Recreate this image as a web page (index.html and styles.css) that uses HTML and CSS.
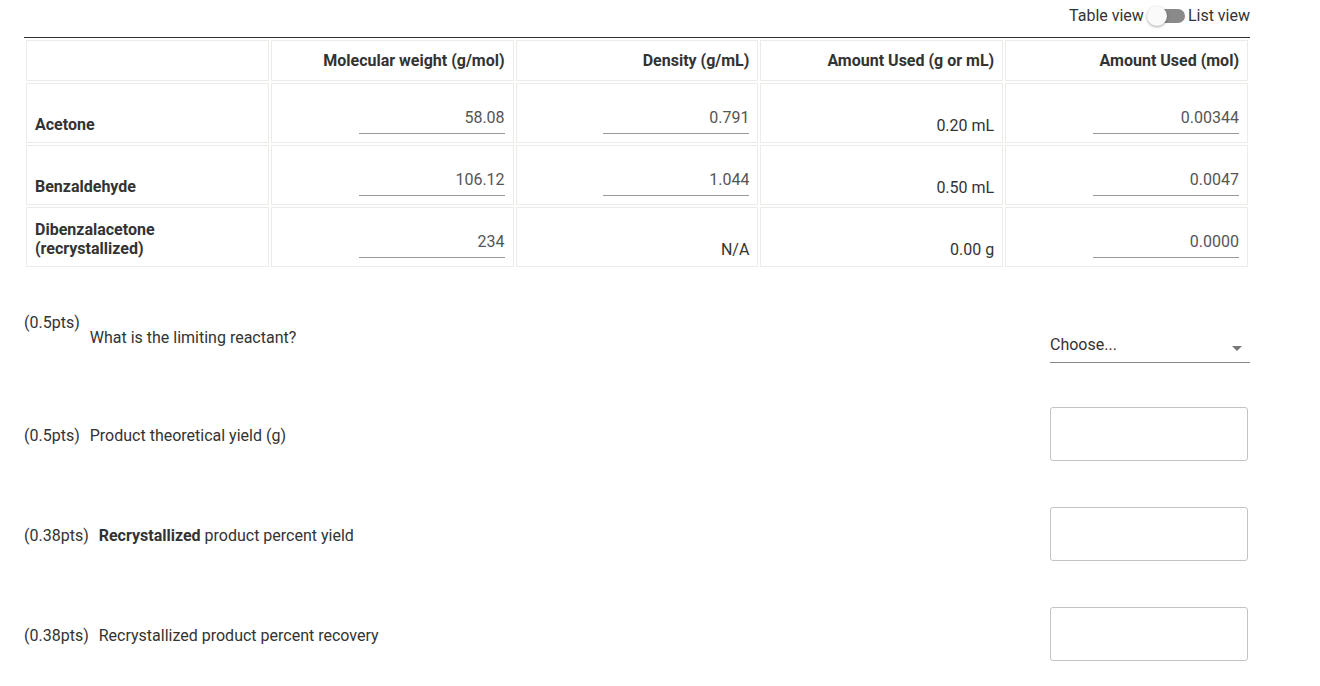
FILE: index.html
```html
<!DOCTYPE html>
<html>
<head>
<meta charset="utf-8">
<link rel="stylesheet" href="styles.css">
</head>
<body>
<div class="page">
  <div class="view-toggle">
    <span class="toggle-label">Table view</span>
    <span class="switch"><span class="knob"></span></span>
    <span class="toggle-label">List view</span>
  </div>
  <table class="data-table">
    <thead>
      <tr>
        <th></th>
        <th>Molecular weight (g/mol)</th>
        <th>Density (g/mL)</th>
        <th>Amount Used (g or mL)</th>
        <th>Amount Used (mol)</th>
      </tr>
    </thead>
    <tbody>
      <tr>
        <td class="label">Acetone</td>
        <td class="num"><input class="line-input" value="58.08"></td>
        <td class="num"><input class="line-input" value="0.791"></td>
        <td class="num text">0.20 mL</td>
        <td class="num"><input class="line-input" value="0.00344"></td>
      </tr>
      <tr>
        <td class="label">Benzaldehyde</td>
        <td class="num"><input class="line-input" value="106.12"></td>
        <td class="num"><input class="line-input" value="1.044"></td>
        <td class="num text">0.50 mL</td>
        <td class="num"><input class="line-input" value="0.0047"></td>
      </tr>
      <tr>
        <td class="label">Dibenzalacetone<br>(recrystallized)</td>
        <td class="num"><input class="line-input" value="234"></td>
        <td class="num text">N/A</td>
        <td class="num text">0.00 g</td>
        <td class="num"><input class="line-input" value="0.0000"></td>
      </tr>
    </tbody>
  </table>

  <div class="questions">
    <div class="q q-first">
      <div class="q-main">
        <span class="pts">(0.5pts)</span>
        <span class="q-text q-text-drop">What is the limiting reactant?</span>
      </div>
      <div class="select">
        <span class="select-text">Choose...</span>
        <span class="caret"></span>
      </div>
    </div>
    <div class="q">
      <div class="q-main">
        <span class="pts">(0.5pts)</span>
        <span class="q-text">Product theoretical yield (g)</span>
      </div>
      <input class="box-input">
    </div>
    <div class="q">
      <div class="q-main">
        <span class="pts">(0.38pts)</span>
        <span class="q-text"><b>Recrystallized</b> product percent yield</span>
      </div>
      <input class="box-input">
    </div>
    <div class="q">
      <div class="q-main">
        <span class="pts">(0.38pts)</span>
        <span class="q-text">Recrystallized product percent recovery</span>
      </div>
      <input class="box-input">
    </div>
  </div>
</div>
</body>
</html>
```

FILE: styles.css
```css
* { box-sizing: border-box; }

body {
  margin: 0;
  background: #fff;
  font-family: Roboto, "Liberation Sans", Arial, sans-serif;
  font-size: 16px;
  color: #333;
}

.page {
  width: 1226px;
  margin-left: 24px;
}

.view-toggle {
  height: 30px;
  padding-top: 2px;
  display: flex;
  justify-content: flex-end;
  align-items: center;
  gap: 3px;
  margin-bottom: 7px;
}

.toggle-label {
  line-height: 20px;
  color: #333;
}

.switch {
  position: relative;
  width: 38px;
  height: 14px;
  display: inline-block;
}
.switch::before {
  content: "";
  position: absolute;
  left: 4px;
  right: 0;
  top: 0;
  height: 14px;
  border-radius: 7px;
  background: #8a8a8a;
}
.knob {
  position: absolute;
  left: 0;
  top: -3px;
  width: 20px;
  height: 20px;
  border-radius: 50%;
  background: #fafafa;
  box-shadow: 0 1px 3px rgba(0,0,0,0.35);
}

.data-table {
  width: 1226px;
  border-collapse: separate;
  border-spacing: 2px;
  border-top: 1px solid #333;
  table-layout: fixed;
}

.data-table th,
.data-table td {
  border: 1px solid #ecebe7;
  padding: 0 8px;
  text-align: right;
}

.data-table th {
  height: 41px;
  font-weight: 700;
  vertical-align: middle;
  line-height: 20px;
}

.data-table td {
  height: 60px;
  vertical-align: bottom;
  padding-bottom: 8px;
  line-height: 19px;
}

.data-table td.label {
  text-align: left;
  font-weight: 700;
}

.data-table td.text {
  padding-bottom: 7px;
}

.line-input {
  display: block;
  margin-left: auto;
  width: 146px;
  height: 32px;
  border: none;
  border-bottom: 1px solid #999;
  padding: 0;
  font-family: Roboto, "Liberation Sans", Arial, sans-serif;
  font-size: 16px;
  color: #555;
  text-align: right;
  background: transparent;
  outline: none;
}

.questions {
  padding-top: 43px;
}

.q {
  height: 100px;
  display: flex;
  align-items: center;
  justify-content: space-between;
}

.q .q-main {
  padding-top: 4px;
}

.q.q-first {
  height: 72px;
  padding-top: 1px;
  align-items: flex-start;
}

.q.q-first .q-main {
  padding-top: 0;
}

.q-main {
  display: flex;
  align-items: flex-start;
  line-height: 20px;
}

.pts {
  margin-right: 10px;
}

.q-text-drop {
  margin-top: 15px;
}

.select {
  width: 200px;
  margin-top: 22px;
  padding-bottom: 7px;
  border-bottom: 1px solid #888;
  display: flex;
  justify-content: space-between;
  align-items: center;
  line-height: 20px;
}

.caret {
  width: 0;
  height: 0;
  border-left: 5px solid transparent;
  border-right: 5px solid transparent;
  border-top: 5px solid #777;
  margin-right: 8px;
  margin-top: 6px;
}

.box-input {
  width: 198px;
  height: 54px;
  border: 1px solid #c4c4c4;
  border-radius: 3px;
  margin-right: 2px;
  background: #fff;
}
```
